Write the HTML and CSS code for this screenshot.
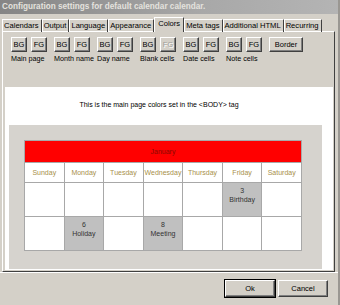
FILE: index.html
```html
<!DOCTYPE html>
<html lang="en">
<head>
    <meta charset="UTF-8">
    <title>Configuration settings</title>
    <link rel="stylesheet" href="styles.css">
</head>
<body>
    <div class="window">
        <div class="titlebar">Configuration settings for default calendar calendar.</div>

        <div class="tabs">
            <span class="tab">Calendars</span>
            <span class="tab">Output</span>
            <span class="tab">Language</span>
            <span class="tab">Appearance</span>
            <span class="tab tab-active">Colors</span>
            <span class="tab">Meta tags</span>
            <span class="tab">Additional HTML</span>
            <span class="tab">Recurring</span>
        </div>

        <div class="panel">
            <div class="color-groups">
                <div class="group">
                    <div class="pair"><button class="btn">BG</button><button class="btn">FG</button></div>
                    <span class="label">Main page</span>
                </div>
                <div class="group">
                    <div class="pair"><button class="btn">BG</button><button class="btn">FG</button></div>
                    <span class="label">Month name</span>
                </div>
                <div class="group">
                    <div class="pair"><button class="btn">BG</button><button class="btn">FG</button></div>
                    <span class="label">Day name</span>
                </div>
                <div class="group">
                    <div class="pair"><button class="btn">BG</button><button class="btn" disabled>FG</button></div>
                    <span class="label">Blank cells</span>
                </div>
                <div class="group">
                    <div class="pair"><button class="btn">BG</button><button class="btn">FG</button></div>
                    <span class="label">Date cells</span>
                </div>
                <div class="group">
                    <div class="pair"><button class="btn">BG</button><button class="btn">FG</button></div>
                    <span class="label">Note cells</span>
                </div>
                <div class="group">
                    <div class="pair"><button class="btn btn-wide">Border</button></div>
                </div>
            </div>

            <div class="preview">
                <p class="preview-text">This is the main page colors set in the &lt;BODY&gt; tag</p>
                <div class="cal-frame">
                    <table class="cal">
                        <tr><th class="month" colspan="7">January</th></tr>
                        <tr class="days">
                            <td>Sunday</td><td>Monday</td><td>Tuesday</td><td>Wednesday</td><td>Thursday</td><td>Friday</td><td>Saturday</td>
                        </tr>
                        <tr class="week">
                            <td></td><td></td><td></td><td></td><td></td><td class="note">3<br>Birthday</td><td></td>
                        </tr>
                        <tr class="week">
                            <td></td><td class="note">6<br>Holiday</td><td></td><td class="note">8<br>Meeting</td><td></td><td></td><td></td>
                        </tr>
                    </table>
                </div>
            </div>
        </div>

        <div class="footer">
            <button class="btn btn-dialog btn-default">Ok</button>
            <button class="btn btn-dialog">Cancel</button>
        </div>
    </div>
</body>
</html>
```

FILE: styles.css
```css
* {
    margin: 0;
    padding: 0;
    box-sizing: border-box;
}

body {
    font-family: "Liberation Sans", Arial, sans-serif;
    background: #d4d0c8;
    color: #000;
    width: 340px;
    height: 305px;
    overflow: hidden;
}

.window {
    width: 340px;
    height: 305px;
    border-right: 2px solid #9a9792;
    background: #d4d0c8;
}

.titlebar {
    height: 14px;
    line-height: 14px;
    padding-left: 2px;
    font-size: 8.2px;
    font-weight: bold;
    color: #e4e2de;
    background: linear-gradient(to right, #858585, #a8a8a8 60%, #b4b4b4);
    white-space: nowrap;
}

.tabs {
    display: flex;
    height: 17px;
    padding: 4px 0 0 2px;
    font-size: 7.6px;
}

.tab {
    height: 13px;
    line-height: 12px;
    padding: 0 2px 0 1px;
    border-top: 1px solid #fff;
    border-left: 1px solid #fff;
    border-right: 1px solid #404040;
    margin-top: 1px;
    white-space: nowrap;
}

.tab-active {
    height: 15px;
    margin-top: -1px;
    padding: 0 3px;
    position: relative;
    z-index: 1;
    background: #d4d0c8;
}

.panel {
    margin: 0 3px 0 2px;
    height: 241px;
    border-top: 1px solid #fff;
    border-left: 1px solid #fff;
    border-right: 1px solid #404040;
    border-bottom: 1px solid #404040;
    padding: 5px 1px 0 2px;
}

.color-groups {
    display: flex;
    gap: 7px;
    padding-left: 6px;
    height: 50px;
}

.group {
    display: flex;
    flex-direction: column;
    gap: 2px;
    width: 36px;
}

.pair {
    display: flex;
    gap: 4px;
}

.btn {
    font-family: "Liberation Sans", Arial, sans-serif;
    font-size: 7.5px;
    width: 16px;
    height: 15px;
    background: #d4d0c8;
    color: #000;
    border: 1px solid;
    border-color: #fff #404040 #404040 #fff;
    box-shadow: inset -1px -1px #808080;
}

.btn:disabled {
    color: #a09d98;
    text-shadow: 1px 1px #fff;
}

.btn-wide {
    width: 34px;
}

.label {
    font-size: 7.2px;
    white-space: nowrap;
}

.preview {
    background: #fff;
    height: 183px;
    overflow: hidden;
    padding: 14px 12px 0 4px;
}

.preview-text {
    font-size: 7px;
    text-align: center;
    padding-right: 12px;
    height: 24px;
}

.cal-frame {
    background: #d6d3ce;
    width: 313px;
    padding: 15px 20px 18px 15px;
}

.cal {
    width: 278px;
    border-collapse: collapse;
    table-layout: fixed;
    font-size: 7px;
    text-align: center;
}

.cal td {
    border: 1px solid #a8a8a8;
    background: #fff;
}

.month {
    background: #f00;
    color: #8a0a00;
    font-weight: normal;
    height: 22px;
    border: 1px solid #a8a8a8;
}

.days td {
    height: 20px;
    color: #a8904a;
}

.week td {
    height: 34px;
    vertical-align: top;
    padding-top: 3px;
    color: #333;
    line-height: 9px;
}

.cal td.note {
    background: #c0c0c0;
}

.footer {
    display: flex;
    justify-content: flex-end;
    gap: 3px;
    padding: 7px 10px 0 0;
    border-top: 1px solid #fff;
}

.btn-dialog {
    width: 50px;
    height: 17px;
    font-size: 7.5px;
}

.btn-default {
    outline: 1px solid #000;
}
```
